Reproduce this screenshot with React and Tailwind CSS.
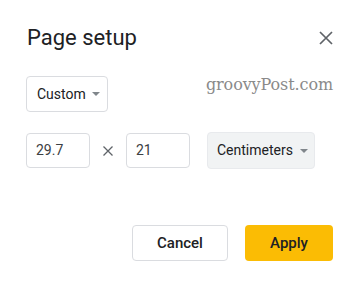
function Caret() {
  return (
    <svg className="w-[8px] h-[4px] shrink-0 text-[#80868b]" viewBox="0 0 8 4" aria-hidden="true">
      <path d="M0 0h8L4 4z" fill="currentColor" />
    </svg>
  )
}

function App() {
  return (
    <div
      className="w-[362px] h-[286px] bg-white flex flex-col pl-[26px] pr-[29px] pt-[22px] pb-[25px] text-[#202124]"
      style={{ fontFamily: 'Roboto, "Liberation Sans", sans-serif' }}
    >
      {/* Header */}
      <div className="flex items-center justify-between h-[32px]">
        <h1 className="text-[22px] leading-[28px] pl-[1px]">Page setup</h1>
        <svg
          className="w-[14px] h-[14px] text-[#5f6368]"
          viewBox="0 0 14 14"
          fill="none"
          stroke="currentColor"
          strokeWidth={1.7}
          aria-hidden="true"
        >
          <path d="M1 1l12 12M13 1L1 13" />
        </svg>
      </div>

      {/* Orientation / size row */}
      <div className="flex items-start justify-between mt-[22px]">
        <div className="w-[82px] h-[36px] border border-[#dadce0] rounded-[4px] flex items-center pl-[10px] pr-[7px] justify-between text-[14px] text-[#202124]">
          <span>Custom</span>
          <Caret />
        </div>
        <span
          className="text-[16px] leading-[20px] text-[#8a8a8a] mt-[-1px] tracking-[-0.1px]"
          style={{ fontFamily: '"DejaVu Serif", serif' }}
        >
          groovyPost.com
        </span>
      </div>

      {/* Dimensions row */}
      <div className="flex items-center mt-[20px]">
        <div className="w-[64px] h-[35px] border border-[#dadce0] rounded-[4px] flex items-center pl-[9px] text-[14px] text-[#3c4043]">
          29.7
        </div>
        <svg
          className="w-[10px] h-[10px] mx-[13px] text-[#5f6368]"
          viewBox="0 0 10 10"
          fill="none"
          stroke="currentColor"
          strokeWidth={1.3}
          aria-hidden="true"
        >
          <path d="M0.5 0.5l9 9M9.5 0.5l-9 9" />
        </svg>
        <div className="w-[64px] h-[35px] border border-[#dadce0] rounded-[4px] flex items-center pl-[9px] text-[14px] text-[#3c4043]">
          21
        </div>
        <div className="ml-[17px] w-[108px] h-[37px] bg-[#f1f3f4] border border-[#e8eaed] rounded-[4px] flex items-center gap-[7px] pl-[9px] text-[14px] text-[#202124]">
          <span>Centimeters</span>
          <Caret />
        </div>
      </div>

      {/* Actions */}
      <div className="mt-auto flex justify-end gap-[17px]">
        <button className="w-[96px] h-[36px] border border-[#dadce0] rounded-[4px] bg-white text-[15px] font-medium text-[#202124]">
          Cancel
        </button>
        <button className="w-[88px] h-[36px] rounded-[4px] bg-[#fbbc04] text-[15px] font-medium text-[#202124]">
          Apply
        </button>
      </div>
    </div>
  )
}

export default App
